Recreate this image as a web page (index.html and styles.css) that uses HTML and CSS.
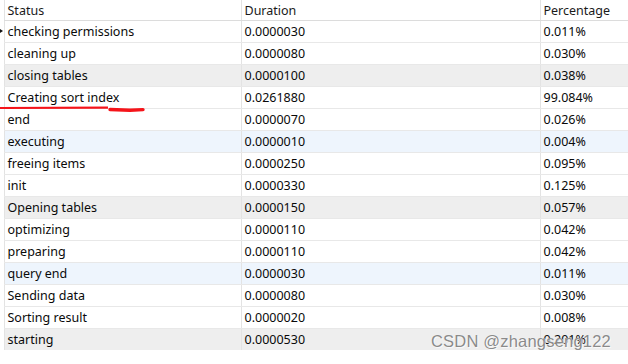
FILE: index.html
```html
<!DOCTYPE html>
<html>
<head>
<meta charset="utf-8">
<link rel="stylesheet" href="styles.css">
</head>
<body>
<div class="grid">
  <table class="result">
    <colgroup>
      <col class="c-gut"><col class="c-status"><col class="c-dur"><col class="c-pct">
    </colgroup>
    <thead>
      <tr><th class="gut"></th><th>Status</th><th>Duration</th><th>Percentage</th></tr>
    </thead>
    <tbody>
      <tr><td class="gut"><span class="marker"></span></td><td>checking permissions</td><td>0.0000030</td><td>0.011%</td></tr>
      <tr><td class="gut"></td><td>cleaning up</td><td>0.0000080</td><td>0.030%</td></tr>
      <tr class="gray"><td class="gut"></td><td>closing tables</td><td>0.0000100</td><td>0.038%</td></tr>
      <tr><td class="gut"></td><td>Creating sort index</td><td>0.0261880</td><td>99.084%</td></tr>
      <tr><td class="gut"></td><td>end</td><td>0.0000070</td><td>0.026%</td></tr>
      <tr class="blue"><td class="gut"></td><td>executing</td><td>0.0000010</td><td>0.004%</td></tr>
      <tr><td class="gut"></td><td>freeing items</td><td>0.0000250</td><td>0.095%</td></tr>
      <tr><td class="gut"></td><td>init</td><td>0.0000330</td><td>0.125%</td></tr>
      <tr class="gray"><td class="gut"></td><td>Opening tables</td><td>0.0000150</td><td>0.057%</td></tr>
      <tr><td class="gut"></td><td>optimizing</td><td>0.0000110</td><td>0.042%</td></tr>
      <tr><td class="gut"></td><td>preparing</td><td>0.0000110</td><td>0.042%</td></tr>
      <tr class="blue"><td class="gut"></td><td>query end</td><td>0.0000030</td><td>0.011%</td></tr>
      <tr><td class="gut"></td><td>Sending data</td><td>0.0000080</td><td>0.030%</td></tr>
      <tr><td class="gut"></td><td>Sorting result</td><td>0.0000020</td><td>0.008%</td></tr>
      <tr class="gray last"><td class="gut"></td><td>starting</td><td>0.0000530</td><td>0.201%</td></tr>
    </tbody>
  </table>
  <svg class="annot" width="150" height="10" viewBox="0 0 150 10">
    <path d="M0 4 L108 3.6" stroke="#f5141a" stroke-width="2.2" fill="none"/>
    <path d="M110 5.5 L130 6.2 L143 5.6" stroke="#f5141a" stroke-width="3.4" fill="none" stroke-linecap="round"/>
  </svg>
  <div class="watermark">CSDN @zhangseng122</div>
</div>
</body>
</html>
```
FILE: styles.css
```css
html, body {
  margin: 0;
  padding: 0;
  background: #ffffff;
}
.grid {
  position: relative;
  width: 628px;
  height: 364px;
  overflow: hidden;
}
.result {
  border-collapse: collapse;
  table-layout: fixed;
  width: 660px;
  font-family: "Noto Sans", "Open Sans", sans-serif;
  font-size: 12.5px;
  color: #0a0a0a;
}
.c-gut { width: 4px; }
.c-status { width: 237px; }
.c-dur { width: 299px; }
.c-pct { width: 120px; }
.result th, .result td {
  padding: 0 0 0 3px;
  text-align: left;
  font-weight: normal;
  white-space: nowrap;
  overflow: hidden;
  border-left: 1px solid #e3e3e3;
  border-bottom: 1px solid #e8e8e8;
}
.result th {
  height: 20px;
  border-bottom: 1px solid #dcdcdc;
  color: #1a1a1a;
}
.result td { height: 21px; }
.result .gut {
  border-left: none;
  border-bottom: none;
  padding: 0;
  position: relative;
}
.result tr.last td { border-bottom: none; }
.gray td:not(.gut) { background: #eeeeee; }
.blue td:not(.gut) { background: #eef5fd; }
.marker {
  position: absolute;
  left: 0;
  top: 8px;
  width: 0;
  height: 0;
  border-top: 2.5px solid transparent;
  border-bottom: 2.5px solid transparent;
  border-left: 3px solid #111111;
}
.annot {
  position: absolute;
  left: 0;
  top: 104px;
}
.watermark {
  position: absolute;
  left: 431px;
  top: 332px;
  font-family: "Liberation Sans", Arial, sans-serif;
  font-size: 16.5px;
  letter-spacing: 0.2px;
  color: #8a8a8a;
  text-shadow: 0 0 1px #ffffff, 1px 1px 0 rgba(255,255,255,0.7);
}
```
